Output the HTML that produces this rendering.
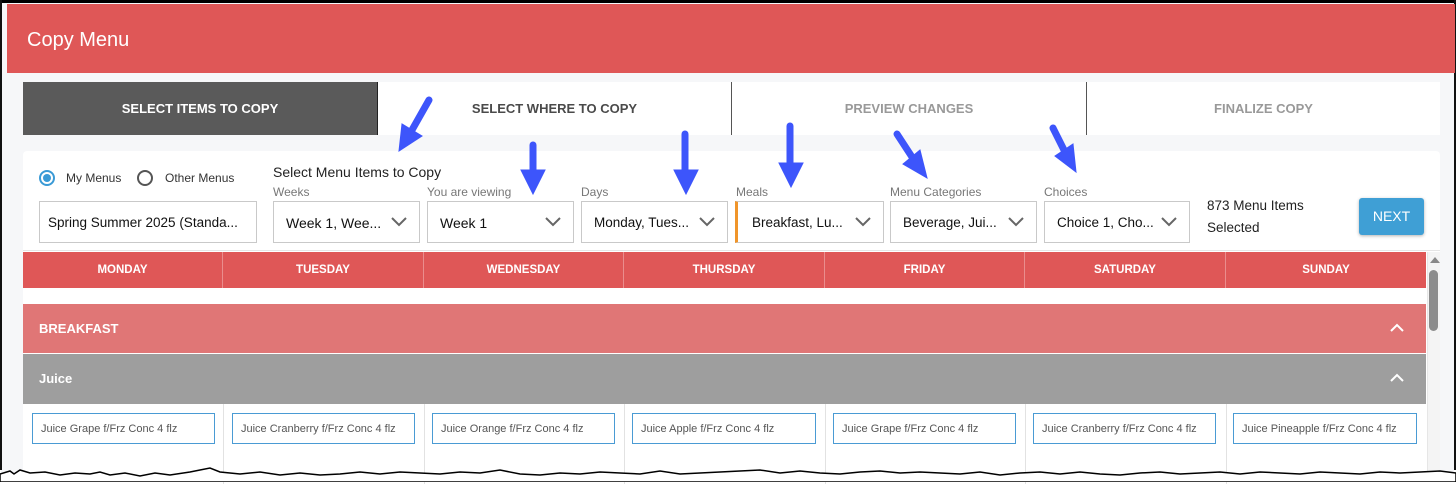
<!DOCTYPE html>
<html><head><meta charset="utf-8"><style>
*{box-sizing:border-box;margin:0;padding:0}
body{width:1456px;height:482px;overflow:hidden;background:#fff;font-family:"Liberation Sans",sans-serif;position:relative}
.a{position:absolute}
.pg{left:1px;top:3px;width:1453px;height:479px;background:#f6f7f9}
.hdr{left:7px;top:4px;width:1448px;height:69px;background:#df5757;color:#fff;font-size:20px;line-height:73px;padding-left:20px}
.tab{top:82px;height:53px;background:#fff;font-weight:bold;font-size:13px;text-align:center;line-height:53px;color:#4a4a4a}
.card{left:23px;top:151px;width:1417px;height:340px;background:#fff;border-radius:4px}
.lbl{font-size:12px;color:#777;top:185px}
.dd{top:201px;height:42px;border:1px solid #c9c9c9;background:#fff;font-size:14px;color:#111;line-height:42px;padding-left:12px;white-space:nowrap}
.chev{position:absolute;right:12px;top:15px;width:16px;height:10px}
.day{top:252px;height:36px;background:#df5757;color:#fff;font-weight:bold;font-size:11.5px;text-align:center;line-height:36px;border-right:1px solid #ea8d8d}
.it{top:413px;height:31px;border:1px solid #4a9bd4;font-size:11px;color:#555;line-height:31px;padding-left:8px;background:#fff;white-space:nowrap;overflow:hidden}
.col{top:404px;width:1px;height:80px;background:#e2e2e2}
</style></head><body>
<div class="a pg"></div>
<div class="a" style="left:0;top:0;width:1456px;height:3px;background:#000"></div>
<div class="a" style="left:0;top:0;width:2px;height:470px;background:#111"></div>
<div class="a" style="left:1454px;top:0;width:2px;height:470px;background:#111"></div>
<div class="a hdr">Copy Menu</div>
<div class="a tab" style="left:23px;width:355px;background:#5a5a5a;color:#fff;border-right:1px solid #222">SELECT ITEMS TO COPY</div>
<div class="a tab" style="left:378px;width:354px;border-right:1px solid #555">SELECT WHERE TO COPY</div>
<div class="a tab" style="left:732px;width:355px;border-right:1px solid #555;color:#999">PREVIEW CHANGES</div>
<div class="a tab" style="left:1087px;width:353px;color:#999">FINALIZE COPY</div>
<div class="a card"></div>
<div class="a" style="left:39px;top:170px;width:16px;height:16px;border:2px solid #3a9ad6;border-radius:50%"></div>
<div class="a" style="left:43px;top:174px;width:8px;height:8px;background:#3a9ad6;border-radius:50%"></div>
<div class="a" style="left:66px;top:171px;font-size:12px;color:#333">My Menus</div>
<div class="a" style="left:137px;top:170px;width:16px;height:16px;border:2px solid #555;border-radius:50%"></div>
<div class="a" style="left:165px;top:171px;font-size:12px;color:#333">Other Menus</div>
<div class="a" style="left:273px;top:164px;font-size:14px;color:#222">Select Menu Items to Copy</div>
<div class="a dd" style="left:39px;width:218px;padding-left:8px;font-size:13.5px">Spring Summer 2025 (Standa...</div>
<div class="a lbl" style="left:273px">Weeks</div>
<div class="a lbl" style="left:427px">You are viewing</div>
<div class="a lbl" style="left:581px">Days</div>
<div class="a lbl" style="left:736px">Meals</div>
<div class="a lbl" style="left:890px">Menu Categories</div>
<div class="a lbl" style="left:1044px">Choices</div>
<div class="a dd" style="left:273px;width:147px">Week 1, Wee...<svg class="chev"><path d="M1 1l7 7 7-7" fill="none" stroke="#666" stroke-width="2"/></svg></div>
<div class="a dd" style="left:427px;width:147px">Week 1<svg class="chev"><path d="M1 1l7 7 7-7" fill="none" stroke="#666" stroke-width="2"/></svg></div>
<div class="a dd" style="left:581px;width:147px;font-size:13.5px">Monday, Tues...<svg class="chev"><path d="M1 1l7 7 7-7" fill="none" stroke="#666" stroke-width="2"/></svg></div>
<div class="a dd" style="left:735px;width:149px;border-left:3px solid #f0952a;padding-left:14px;font-size:13.5px">Breakfast, Lu...<svg class="chev"><path d="M1 1l7 7 7-7" fill="none" stroke="#666" stroke-width="2"/></svg></div>
<div class="a dd" style="left:890px;width:147px;font-size:13.5px">Beverage, Jui...<svg class="chev"><path d="M1 1l7 7 7-7" fill="none" stroke="#666" stroke-width="2"/></svg></div>
<div class="a dd" style="left:1044px;width:146px;font-size:13.5px">Choice 1, Cho...<svg class="chev"><path d="M1 1l7 7 7-7" fill="none" stroke="#666" stroke-width="2"/></svg></div>
<div class="a" style="left:1207px;top:195px;font-size:13.5px;color:#222;line-height:22px">873 Menu Items<br>Selected</div>
<div class="a" style="left:1359px;top:198px;width:65px;height:37px;background:#3f9fd5;border-radius:3px;color:#fff;font-size:14px;text-align:center;line-height:37px;box-shadow:0 1px 3px rgba(0,0,0,.3)">NEXT</div>
<div class="a" style="left:23px;top:250px;width:1417px;height:1px;background:#e5e5e5"></div>
<div class="a day" style="left:23px;width:200px">MONDAY</div>
<div class="a day" style="left:223px;width:201px">TUESDAY</div>
<div class="a day" style="left:424px;width:200px">WEDNESDAY</div>
<div class="a day" style="left:624px;width:201px">THURSDAY</div>
<div class="a day" style="left:825px;width:200px">FRIDAY</div>
<div class="a day" style="left:1025px;width:201px">SATURDAY</div>
<div class="a day" style="left:1226px;width:200px;border-right:0">SUNDAY</div>
<div class="a" style="left:1427px;top:252px;width:13px;height:230px;background:#f4f4f4;border-left:1px solid #e6e6e6"></div>
<svg class="a" style="left:1430px;top:256px" width="10" height="8"><path d="M0 7L5 1 10 7z" fill="#888"/></svg>
<div class="a" style="left:1429px;top:270px;width:9px;height:61px;background:#8c8c8c;border-radius:5px"></div>
<div class="a" style="left:23px;top:304px;width:1403px;height:49px;background:#e07676;color:#fff;font-weight:bold;font-size:13px;line-height:49px;padding-left:16px">BREAKFAST</div>
<div class="a" style="left:23px;top:354px;width:1403px;height:50px;background:#9e9e9e;color:#fff;font-weight:bold;font-size:13px;line-height:50px;padding-left:16px">Juice</div>
<svg class="a" style="left:1390px;top:323px" width="14" height="9"><path d="M1 8l6-6 6 6" fill="none" stroke="#fff" stroke-width="2"/></svg>
<svg class="a" style="left:1390px;top:373px" width="14" height="9"><path d="M1 8l6-6 6 6" fill="none" stroke="#fff" stroke-width="2"/></svg>
<div class="a col" style="left:223px"></div><div class="a col" style="left:424px"></div><div class="a col" style="left:624px"></div><div class="a col" style="left:825px"></div><div class="a col" style="left:1025px"></div><div class="a col" style="left:1226px"></div>
<div class="a it" style="left:32px;width:183px">Juice Grape f/Frz Conc 4 flz</div>
<div class="a it" style="left:232px;width:183px">Juice Cranberry f/Frz Conc 4 flz</div>
<div class="a it" style="left:432px;width:183px">Juice Orange f/Frz Conc 4 flz</div>
<div class="a it" style="left:632px;width:184px">Juice Apple f/Frz Conc 4 flz</div>
<div class="a it" style="left:833px;width:183px">Juice Grape f/Frz Conc 4 flz</div>
<div class="a it" style="left:1033px;width:183px">Juice Cranberry f/Frz Conc 4 flz</div>
<div class="a it" style="left:1233px;width:184px">Juice Pineapple f/Frz Conc 4 flz</div>
<svg class="a" style="left:0;top:460px" width="1456" height="22">
<path d="M0 14 L10 11 14 14 20 10 30 13 45 12 60 15 75 13 90 14 100 12 110 15 125 13 140 16 155 13 170 15 190 12 200 10 210 8 220 12 240 14 260 12 280 15 300 13 320 15 340 14 360 12 380 14 400 12 420 13 440 14 460 12 480 13 500 10 520 14 540 15 560 13 580 14 600 12 620 13 640 14 660 11 680 14 700 13 720 12 740 11 760 10 780 13 800 11 820 13 840 14 860 12 880 11 900 13 920 12 940 13 960 14 980 12 1000 15 1020 13 1040 12 1060 14 1080 12 1100 14 1120 15 1140 13 1160 12 1180 14 1200 13 1220 12 1240 14 1260 12 1280 13 1300 14 1320 12 1340 13 1360 14 1380 12 1400 13 1420 12 1440 11 1456 13 L1456 22 L0 22Z" fill="#fff" stroke="#000" stroke-width="1.5"/>
</svg>
<svg class="a" style="left:0;top:0" width="1456" height="482">
<g stroke="#3d55fb" stroke-width="7" stroke-linecap="round" fill="#3d55fb">
<line x1="429" y1="100" x2="412" y2="130"/><path d="M399 151 L402 124 L422 136Z" stroke-width="1"/>
<line x1="533" y1="145" x2="533" y2="172"/><path d="M533 194 L521 170 L545 170Z" stroke-width="1"/>
<line x1="685" y1="134" x2="685" y2="172"/><path d="M686 194 L674 170 L698 170Z" stroke-width="1"/>
<line x1="790" y1="126" x2="790" y2="165"/><path d="M791 187 L779 163 L803 163Z" stroke-width="1"/>
<line x1="897" y1="134" x2="912" y2="157"/><path d="M927 178 L903 164 L920 150Z" stroke-width="1"/>
<line x1="1053" y1="128" x2="1064" y2="150"/><path d="M1076 172 L1055 156 L1073 144Z" stroke-width="1"/>
</g></svg>
</body></html>
